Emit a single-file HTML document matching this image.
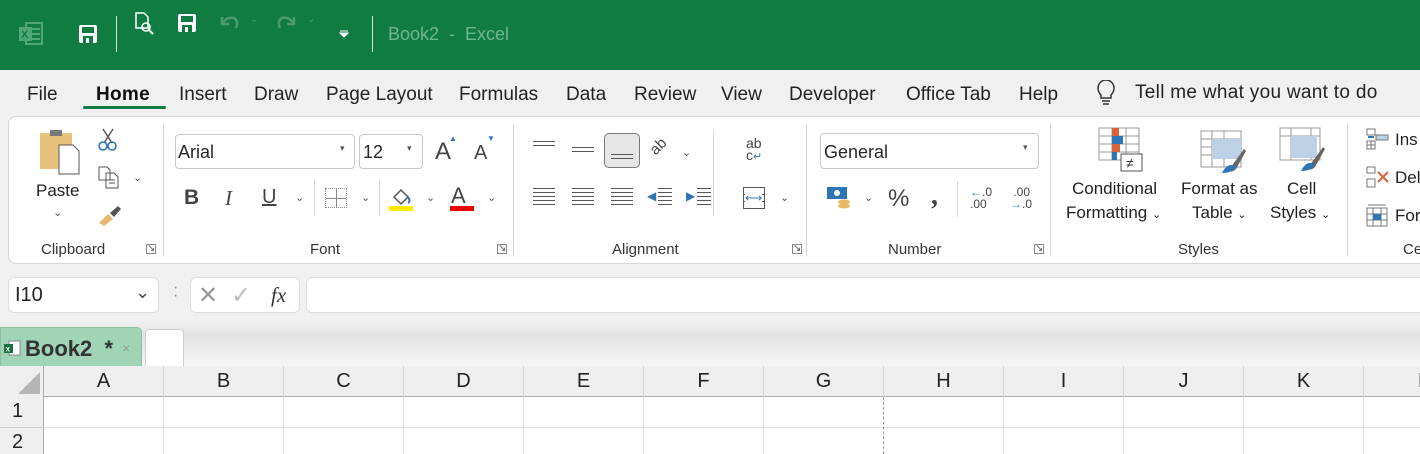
<!DOCTYPE html><html><head><meta charset="utf-8"><style>
*{margin:0;padding:0;box-sizing:border-box}
body{width:1420px;height:454px;overflow:hidden;background:#f0f0f0;font-family:"Liberation Sans",sans-serif;position:relative;color:#262626}
.a{position:absolute;white-space:nowrap}
.t{font-size:19px;top:84px;color:#222}
.s{font-size:16px;color:#222}
.lbl{font-size:15px;top:241px;color:#333}
.sep{position:absolute;width:1px;background:#d8d8d8}
.dd{position:absolute;font-size:11px;color:#555}
.box{position:absolute;background:#fff;border:1px solid #c8c8c8;border-radius:4px}
.col{position:absolute;top:366px;height:31px;width:120px;border-right:1px solid #d4d4d4;text-align:center;font-size:20px;line-height:31px;color:#222}
.ln{position:absolute;height:2px;background:#555}
</style></head><body>
<div class="a" style="left:0;top:0;width:1420px;height:70px;background:#107c41"></div>
<svg class="a" style="left:18px;top:22px" width="26" height="24"><rect x="8" y="1" width="16" height="21" fill="none" stroke="#4fa876" stroke-width="2"/><path d="M14 7h8M14 12h8M14 17h8" stroke="#4fa876" stroke-width="2"/><rect x="1" y="5" width="13" height="14" fill="#4fa876"/><text x="3" y="16" font-size="11" fill="#107c41" font-family="Liberation Sans" font-weight="bold">X</text></svg>
<svg class="a" style="left:78px;top:24px" width="20" height="20"><rect x="1" y="1" width="18" height="18" rx="2" fill="#fff"/><rect x="4" y="3" width="12" height="6" fill="#107c41"/><rect x="5" y="12" width="10" height="7" fill="#107c41"/><rect x="8" y="14" width="3" height="5" fill="#fff"/></svg>
<div class="a" style="left:116px;top:16px;width:1px;height:36px;background:#d0e8d8"></div>
<svg class="a" style="left:134px;top:12px" width="24" height="24"><path d="M2 1h8l4 4v11H2z" fill="none" stroke="#fff" stroke-width="1.5"/><circle cx="12" cy="15" r="4" fill="none" stroke="#fff" stroke-width="1.6"/><path d="M15 18l4 4" stroke="#fff" stroke-width="2"/></svg>
<svg class="a" style="left:177px;top:13px" width="20" height="20"><rect x="1" y="1" width="18" height="18" rx="2" fill="#fff"/><rect x="4" y="3" width="12" height="6" fill="#107c41"/><rect x="5" y="12" width="10" height="7" fill="#107c41"/><rect x="8" y="14" width="3" height="5" fill="#fff"/></svg>
<svg class="a" style="left:218px;top:12px" width="24" height="22"><path d="M4 5v7h7M4 12q5-8 12-6 5 3 2 10" fill="none" stroke="#4d9a6e" stroke-width="2.5"/></svg><div class="a" style="left:250px;top:14px;font-size:10px;color:#4d9a6e">⌄</div>
<svg class="a" style="left:274px;top:12px" width="24" height="22"><path d="M20 5v7h-7M20 12q-5-8-12-6-5 3-2 10" fill="none" stroke="#4d9a6e" stroke-width="2.5"/></svg><div class="a" style="left:307px;top:14px;font-size:10px;color:#4d9a6e">⌄</div>
<svg class="a" style="left:339px;top:30px" width="10" height="8"><path d="M1 1h8M1 3l4 4 4-4z" stroke="#fff" fill="#fff"/></svg>
<div class="a" style="left:372px;top:16px;width:1px;height:36px;background:#d0e8d8"></div>
<div class="a" style="left:388px;top:24px;font-size:18px;color:#6fb590">Book2 &nbsp;- &nbsp;Excel</div>

<div class="a t" style="left:27px">File</div>
<div class="a t" style="left:96px;color:#111;font-weight:bold;letter-spacing:.3px">Home</div>
<div class="a" style="left:83px;top:106px;width:83px;height:3px;background:#107c41;border-radius:2px"></div>
<div class="a t" style="left:179px">Insert</div>
<div class="a t" style="left:254px">Draw</div>
<div class="a t" style="left:326px">Page Layout</div>
<div class="a t" style="left:459px">Formulas</div>
<div class="a t" style="left:566px">Data</div>
<div class="a t" style="left:634px">Review</div>
<div class="a t" style="left:721px">View</div>
<div class="a t" style="left:789px">Developer</div>
<div class="a t" style="left:906px">Office Tab</div>
<div class="a t" style="left:1019px">Help</div>
<svg class="a" style="left:1096px;top:80px" width="20" height="26"><path d="M5 15c-3-3-3-6-3-7a8 8 0 0116 0c0 1 0 4-3 7v3H5z" fill="none" stroke="#333" stroke-width="1.5"/><path d="M6 21h8M7 24h6" stroke="#333" stroke-width="1.5"/></svg>
<div class="a t" style="left:1135px;top:82px;letter-spacing:.3px">Tell me what you want to do</div>

<div class="a" style="left:8px;top:116px;width:1430px;height:148px;background:#fff;border:1px solid #d6d6d6;border-radius:8px"></div>
<!-- clipboard -->
<svg class="a" style="left:38px;top:127px" width="46" height="48"><rect x="2" y="6" width="32" height="36" fill="#e8c27c"/><rect x="12" y="3" width="12" height="6" fill="#7a7a7a"/><path d="M21 18h14l6 6v23H21z" fill="#fff" stroke="#555"/></svg>
<div class="a s" style="left:36px;top:181px;font-size:17px">Paste</div>
<div class="dd" style="left:53px;top:206px">⌄</div>
<svg class="a" style="left:97px;top:128px" width="22" height="24"><path d="M6 1l9 14M16 1L7 15" stroke="#555" stroke-width="1.5"/><circle cx="6" cy="18" r="4" fill="none" stroke="#2e75b6" stroke-width="1.6"/><circle cx="15" cy="18" r="4" fill="none" stroke="#2e75b6" stroke-width="1.6"/></svg>
<svg class="a" style="left:98px;top:166px" width="22" height="24"><path d="M1 1h8l3 3v10H1zM8 7h8l4 4v11H8z" fill="#fff" stroke="#555"/><path d="M11 14h6M11 17h6" stroke="#555"/></svg>
<div class="dd" style="left:133px;top:171px">⌄</div>
<svg class="a" style="left:96px;top:205px" width="26" height="22"><path d="M3 18l9-9 5 5-9 7z" fill="#e8b86a"/><path d="M14 8l8-7 3 3-7 8z" fill="#555"/></svg>
<div class="a lbl" style="left:41px">Clipboard</div>
<div class="a" style="left:146px;top:244px;font-size:10px;color:#555;border:1px solid #888;width:10px;height:10px;line-height:8px;text-align:center">↘</div>
<div class="sep" style="left:163px;top:124px;height:132px"></div>
<!-- font -->
<div class="box" style="left:175px;top:134px;width:180px;height:35px"><span class="a" style="left:2px;top:7px;font-size:18px">Arial</span><span class="a" style="left:164px;top:8px;font-size:9px;color:#555">▾</span></div>
<div class="box" style="left:359px;top:134px;width:64px;height:35px"><span class="a" style="left:3px;top:7px;font-size:18px">12</span><span class="a" style="left:47px;top:8px;font-size:9px;color:#555">▾</span></div>
<div class="a" style="left:435px;top:138px;font-size:24px;color:#444">A</div><div class="a" style="left:449px;top:134px;font-size:8px;color:#2e75b6">▲</div>
<div class="a" style="left:474px;top:142px;font-size:20px;color:#444">A</div><div class="a" style="left:487px;top:134px;font-size:8px;color:#2e75b6">▼</div>
<div class="a" style="left:184px;top:186px;font-size:21px;font-weight:bold;color:#444">B</div>
<div class="a" style="left:225px;top:186px;font-size:21px;font-style:italic;color:#444;font-family:'Liberation Serif'">I</div>
<div class="a" style="left:262px;top:186px;font-size:20px;text-decoration:underline;color:#444">U</div>
<div class="dd" style="left:295px;top:191px">⌄</div>
<div class="sep" style="left:314px;top:180px;height:36px"></div>
<div class="a" style="left:325px;top:188px;width:22px;height:20px;border:1px dotted #888;background:linear-gradient(#888,#888) 10px 0/1px 100% no-repeat,linear-gradient(#888,#888) 0 9px/100% 1px no-repeat"></div>
<div class="dd" style="left:361px;top:191px">⌄</div>
<div class="sep" style="left:379px;top:180px;height:36px"></div>
<svg class="a" style="left:388px;top:185px" width="26" height="26"><path d="M6 12l7-7 7 7-7 7z" fill="none" stroke="#555" stroke-width="1.5"/><path d="M20 12q3 4 0 6" stroke="#2e75b6" stroke-width="2" fill="none"/><rect x="1" y="21" width="24" height="5" fill="#ffeb00"/></svg>
<div class="dd" style="left:426px;top:191px">⌄</div>
<div class="a" style="left:451px;top:183px;font-size:22px;color:#444">A</div><div class="a" style="left:450px;top:206px;width:24px;height:5px;background:#e00"></div>
<div class="dd" style="left:487px;top:191px">⌄</div>
<div class="a lbl" style="left:310px">Font</div>
<div class="a" style="left:497px;top:244px;font-size:10px;color:#555;border:1px solid #888;width:10px;height:10px;line-height:8px;text-align:center">↘</div>
<div class="sep" style="left:513px;top:124px;height:132px"></div>
<!-- alignment -->
<div class="ln" style="left:533px;top:141px;width:22px;height:1px;box-shadow:0 4px 0 #555"></div>
<div class="ln" style="left:572px;top:147px;width:22px;height:1px;box-shadow:0 4px 0 #555"></div>
<div class="a" style="left:604px;top:133px;width:36px;height:35px;border:1px solid #777;border-radius:5px;background:#e6e6e6"></div>
<div class="ln" style="left:611px;top:154px;width:22px;height:1px;box-shadow:0 4px 0 #555"></div>
<div class="a" style="left:650px;top:138px;font-size:15px;transform:rotate(-45deg);color:#444">ab</div>
<div class="dd" style="left:682px;top:146px">⌄</div>
<div class="ln" style="left:533px;top:188px;width:22px;height:1px;box-shadow:0 4px 0 #555,0 8px 0 #555,0 12px 0 #555,0 16px 0 #555"></div>
<div class="ln" style="left:572px;top:188px;width:22px;height:1px;box-shadow:0 4px 0 #555,0 8px 0 #555,0 12px 0 #555,0 16px 0 #555"></div>
<div class="ln" style="left:611px;top:188px;width:22px;height:1px;box-shadow:0 4px 0 #555,0 8px 0 #555,0 12px 0 #555,0 16px 0 #555"></div>
<div class="ln" style="left:658px;top:188px;width:14px;height:1px;box-shadow:0 4px 0 #555,0 8px 0 #555,0 12px 0 #555,0 16px 0 #555"></div>
<div class="a" style="left:647px;top:189px;font-size:12px;color:#2e75b6">◀</div>
<div class="ln" style="left:697px;top:188px;width:14px;height:1px;box-shadow:0 4px 0 #555,0 8px 0 #555,0 12px 0 #555,0 16px 0 #555"></div>
<div class="a" style="left:686px;top:189px;font-size:12px;color:#2e75b6">▶</div>
<div class="sep" style="left:713px;top:130px;height:86px"></div>
<div class="a" style="left:746px;top:137px;font-size:14px;line-height:12px;color:#444">ab<br>c<span style="color:#2e75b6;font-size:11px">↵</span></div>
<div class="a" style="left:743px;top:187px;width:22px;height:22px;border:1px solid #555;background:linear-gradient(#555,#555) 0 6px/100% 1px no-repeat,linear-gradient(#555,#555) 0 13px/100% 1px no-repeat"><span class="a" style="left:1px;top:3px;font-size:12px;color:#2e75b6;background:#fff">⟷</span></div>
<div class="dd" style="left:780px;top:191px">⌄</div>
<div class="a lbl" style="left:612px">Alignment</div>
<div class="a" style="left:792px;top:244px;font-size:10px;color:#555;border:1px solid #888;width:10px;height:10px;line-height:8px;text-align:center">↘</div>
<div class="sep" style="left:806px;top:124px;height:132px"></div>
<!-- number -->
<div class="box" style="left:820px;top:133px;width:219px;height:36px"><span class="a" style="left:3px;top:8px;font-size:18px">General</span><span class="a" style="left:202px;top:8px;font-size:9px;color:#555">▾</span></div>
<svg class="a" style="left:826px;top:186px" width="26" height="24"><rect x="1" y="1" width="20" height="12" fill="#2e75b6"/><circle cx="11" cy="7" r="3" fill="#fff"/><ellipse cx="18" cy="16" rx="6" ry="2.5" fill="#e8b86a"/><ellipse cx="18" cy="20" rx="6" ry="2.5" fill="#e8b86a"/></svg>
<div class="dd" style="left:864px;top:191px">⌄</div>
<div class="a" style="left:888px;top:185px;font-size:24px;color:#444">%</div>
<div class="a" style="left:931px;top:180px;font-size:28px;font-weight:bold;color:#444;font-family:'Liberation Serif'">,</div>
<div class="sep" style="left:957px;top:181px;height:36px"></div>
<div class="a" style="left:970px;top:186px;font-size:12px;line-height:12px;color:#444"><span style="color:#2e75b6">←</span>.0<br>.00</div>
<div class="a" style="left:1010px;top:186px;font-size:12px;line-height:12px;color:#444">&nbsp;.00<br><span style="color:#2e75b6">→</span>.0</div>
<div class="a lbl" style="left:888px">Number</div>
<div class="a" style="left:1034px;top:244px;font-size:10px;color:#555;border:1px solid #888;width:10px;height:10px;line-height:8px;text-align:center">↘</div>
<div class="sep" style="left:1050px;top:124px;height:132px"></div>
<!-- styles -->
<svg class="a" style="left:1098px;top:127px" width="46" height="46"><path d="M1 1h40v32H1zM1 9h40M1 17h40M1 25h40M14 1v32M28 1v32" stroke="#999" fill="none"/><rect x="14" y="1" width="7" height="8" fill="#d9623b"/><rect x="14" y="9" width="11" height="8" fill="#2e75b6"/><rect x="14" y="17" width="8" height="8" fill="#d9623b"/><rect x="14" y="25" width="5" height="8" fill="#2e75b6"/><rect x="23" y="27" width="21" height="17" fill="#fff" stroke="#555"/><text x="28" y="41" font-size="14" fill="#333">≠</text></svg>
<div class="a s" style="left:1072px;top:179px;font-size:17px">Conditional</div>
<div class="a s" style="left:1066px;top:203px;font-size:17px">Formatting <span style="font-size:11px">⌄</span></div>
<svg class="a" style="left:1200px;top:127px" width="46" height="48"><path d="M1 4h40v36H1zM1 12h40M1 20h40M1 28h40M12 4v36M24 4v36" stroke="#999" fill="none"/><rect x="12" y="12" width="29" height="20" fill="#bcd0e6"/><path d="M28 44l16-22 2 2-10 18q-4 4-8 2z" fill="#666"/><path d="M22 46q6-12 14-6-4 6-14 6z" fill="#2e75b6"/></svg>
<div class="a s" style="left:1181px;top:179px;font-size:17px">Format as</div>
<div class="a s" style="left:1192px;top:203px;font-size:17px">Table <span style="font-size:11px">⌄</span></div>
<svg class="a" style="left:1279px;top:127px" width="46" height="48"><path d="M1 1h40v32H1zM1 9h40M12 1v32M32 1v32" stroke="#999" fill="none"/><rect x="12" y="9" width="26" height="22" fill="#bcd0e6"/><path d="M28 42l16-22 2 2-10 18q-4 4-8 2z" fill="#666"/><path d="M22 44q6-12 14-6-4 6-14 6z" fill="#2e75b6"/></svg>
<div class="a s" style="left:1287px;top:179px;font-size:17px">Cell</div>
<div class="a s" style="left:1270px;top:203px;font-size:17px">Styles <span style="font-size:11px">⌄</span></div>
<div class="a lbl" style="left:1178px">Styles</div>
<div class="sep" style="left:1347px;top:124px;height:132px"></div>
<svg class="a" style="left:1366px;top:128px" width="24" height="24"><path d="M1 1h8v6H1zM1 13h8v8H1zM5 13v8M1 17h8" stroke="#777" fill="none"/><rect x="10" y="7" width="12" height="5" fill="#bcd0e6" stroke="#777"/><path d="M2 9h6" stroke="#2e75b6" stroke-width="2"/></svg>
<div class="a s" style="left:1395px;top:130px;font-size:17px">Ins</div>
<svg class="a" style="left:1366px;top:166px" width="24" height="24"><path d="M1 1h8v6H1zM1 13h8v8H1z" stroke="#777" fill="none"/><path d="M12 6l10 10M22 6L12 16" stroke="#d9623b" stroke-width="2"/></svg>
<div class="a s" style="left:1395px;top:168px;font-size:17px">Del</div>
<svg class="a" style="left:1366px;top:203px" width="24" height="24"><path d="M1 5h20v18H1zM1 11h20M1 17h20M7 5v18M15 5v18M2 2h18" stroke="#777" fill="none"/><rect x="7" y="11" width="8" height="6" fill="#2e75b6"/></svg>
<div class="a s" style="left:1395px;top:206px;font-size:17px">For</div>
<div class="a lbl" style="left:1403px">Ce</div>

<!-- formula bar -->
<div class="box" style="left:8px;top:277px;width:151px;height:36px;border-radius:6px;border-color:#ddd"><span class="a" style="left:6px;top:6px;font-size:20px;color:#222">I10</span><span class="a" style="left:126px;top:4px;font-size:18px;color:#444">⌄</span></div>
<div class="a" style="left:173px;top:284px;font-size:16px;color:#888;line-height:8px">·<br>·</div>
<div class="box" style="left:190px;top:277px;width:110px;height:36px;border-radius:6px;border-color:#ddd"><span class="a" style="left:7px;top:3px;font-size:24px;color:#999">✕</span><span class="a" style="left:40px;top:3px;font-size:24px;color:#bbb">✓</span><span class="a" style="left:80px;top:5px;font-size:21px;font-style:italic;font-family:'Liberation Serif';color:#333">fx</span></div>
<div class="box" style="left:306px;top:277px;width:1130px;height:36px;border-radius:6px;border-color:#ddd"></div>

<!-- tabs -->
<div class="a" style="left:0;top:322px;width:1420px;height:44px;background:linear-gradient(#f0f0f0,#e2e2e2 30%,#f6f6f6)"></div>
<div class="a" style="left:0;top:327px;width:142px;height:39px;background:#9fd5b6;border:1px solid #8cc0a2;border-bottom:none;border-radius:0 5px 0 0"></div>
<svg class="a" style="left:3px;top:340px" width="18" height="16"><rect x="6" y="1" width="11" height="14" fill="#fff" stroke="#888"/><rect x="1" y="4" width="9" height="9" fill="#1d6f42"/><text x="2.5" y="11.5" font-size="8" fill="#fff" font-weight="bold">x</text></svg>
<div class="a" style="left:25px;top:336px;font-size:22px;font-weight:bold;color:#333">Book2 &nbsp;*</div>
<div class="a" style="left:122px;top:340px;font-size:14px;color:#9a9a9a">×</div>
<div class="a" style="left:145px;top:329px;width:39px;height:37px;background:#fff;border:1px solid #ccc;border-bottom:none;border-radius:4px 4px 0 0"></div>

<!-- grid -->
<div class="a" style="left:0;top:366px;width:1420px;height:31px;background:#efefef;border-bottom:1px solid #aaa"></div>
<div class="a" style="left:0;top:366px;width:44px;height:88px;background:#efefef;border-right:1px solid #aaa"></div>
<div class="a" style="left:18px;top:372px;width:0;height:0;border-left:22px solid transparent;border-bottom:22px solid #b5b5b5"></div>
<div class="a" style="left:44px;top:397px;width:1376px;height:57px;background:#fff"></div>
<div class="a" style="left:44px;top:427px;width:1376px;height:1px;background:#dcdcdc"></div>
<div class="a" style="left:0;top:427px;width:44px;height:1px;background:#ccc"></div>
<div class="col" style="left:44px">A</div><div class="col" style="left:164px">B</div><div class="col" style="left:284px">C</div><div class="col" style="left:404px">D</div><div class="col" style="left:524px">E</div><div class="col" style="left:644px">F</div><div class="col" style="left:764px">G</div><div class="col" style="left:884px">H</div><div class="col" style="left:1004px">I</div><div class="col" style="left:1124px">J</div><div class="col" style="left:1244px">K</div><div class="col" style="left:1364px">L</div>
<div class="a" style="left:163px;top:397px;width:1px;height:57px;background:#dcdcdc;box-shadow:120px 0 #dcdcdc,240px 0 #dcdcdc,360px 0 #dcdcdc,480px 0 #dcdcdc,600px 0 #dcdcdc,840px 0 #dcdcdc,960px 0 #dcdcdc,1080px 0 #dcdcdc,1200px 0 #dcdcdc"></div>
<div class="a" style="left:883px;top:397px;width:0;height:57px;border-left:1px dashed #999"></div>
<div class="a" style="left:12px;top:400px;font-size:20px;color:#222">1</div>
<div class="a" style="left:12px;top:431px;font-size:20px;color:#222">2</div>
</body></html>
